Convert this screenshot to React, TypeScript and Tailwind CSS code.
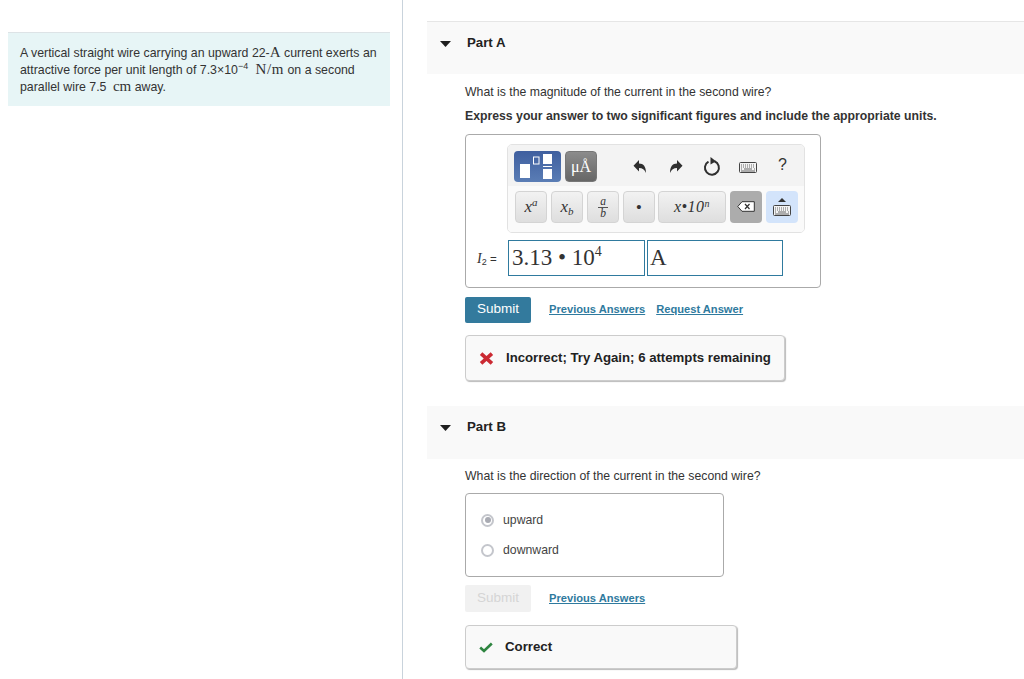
const serif = "font-['Liberation_Serif',serif]";

function Caret() {
  return <svg width="11" height="6" viewBox="0 0 11 6" className="block"><path d="M0 0H11L5.5 6Z" fill="#1f1f1f" /></svg>;
}

function PartHeader({ label, h }: { label: string; h: string }) {
  return (
    <div className={`flex items-start bg-[#f9f9f9] ${h}`}>
      <div className="ml-[13px] mt-[19px] w-[27px]"><Caret /></div>
      <div className="font-bold text-[13.25px] leading-[16px] mt-[13px] text-[#222]">{label}</div>
    </div>
  );
}

function Key({ w, children, cls = "" }: { w: string; children: React.ReactNode; cls?: string }) {
  return (
    <div className={`${w} h-[32px] rounded-[4px] border border-[#d4d4d4] bg-gradient-to-b from-[#f2f2f2] to-[#dedede] flex items-center justify-center text-[#333] ${serif} italic ${cls}`}>
      {children}
    </div>
  );
}

function KeyboardIcon({ w = 18, h = 11 }: { w?: number; h?: number }) {
  return (
    <svg width={w} height={h} viewBox="0 0 18 11" className="block">
      <rect x="0.5" y="0.5" width="17" height="10" rx="1" fill="#f4f4f4" stroke="#444" />
      <path d="M2 3H16M2 5H16" stroke="#666" strokeWidth="1" strokeDasharray="1 1" />
      <path d="M2 7H3M5 7H13M15 7H16M2 9H16" stroke="#666" strokeWidth="1" />
    </svg>
  );
}

function Toolbar() {
  return (
    <div className="ml-[41px] w-[298px] h-[89px] rounded-[5px] border border-[#e2e2e2] overflow-hidden bg-white">
      <div className="h-[41px] bg-[#f3f3f3] flex items-start pt-[6px] pl-[6px]">
        <div className="w-[47px] h-[31px] rounded-[4px] bg-gradient-to-b from-[#3f5f9f] to-[#5a7db5] flex items-center justify-center">
          <svg width="37" height="27" viewBox="0 0 37 27" className="block">
            <rect x="1" y="11" width="10" height="14" fill="#fff" />
            <rect x="14.5" y="4" width="5.5" height="7" fill="none" stroke="#fff" strokeWidth="1" />
            <rect x="24" y="1" width="9" height="10" fill="#fff" />
            <rect x="24" y="13" width="9" height="1" fill="#fff" />
            <rect x="24" y="16" width="9" height="10" fill="#fff" />
          </svg>
        </div>
        <div className={`ml-[4px] w-[32px] h-[31px] rounded-[4px] bg-gradient-to-b from-[#8c8c8c] to-[#666] border border-[#777] flex items-center justify-center text-white text-[16px] ${serif}`}>
          μÅ
        </div>
        <div className="ml-[36px] mt-[8px]">
          <svg width="14" height="15" viewBox="0 0 14 15" className="block"><path d="M6 1V4.5C10.5 4.5 13 7.5 13 14C11.5 10.5 9.5 9 6 9V12.5L0.5 6.7Z" fill="#2f2f2f" /></svg>
        </div>
        <div className="ml-[22px] mt-[8px]">
          <svg width="14" height="15" viewBox="0 0 14 15" className="block"><path d="M8 1V4.5C3.5 4.5 1 7.5 1 14C2.5 10.5 4.5 9 8 9V12.5L13.5 6.7Z" fill="#2f2f2f" /></svg>
        </div>
        <div className="ml-[20px] mt-[6px]">
          <svg width="18" height="19" viewBox="0 0 18 19" className="block"><path d="M11.5 4.2A7 7 0 1 1 5.5 4.6" fill="none" stroke="#2f2f2f" strokeWidth="2" /><path d="M7.5 0L13 4.2L7.5 7.5Z" fill="#2f2f2f" /></svg>
        </div>
        <div className="ml-[18px] mt-[11px]"><KeyboardIcon /></div>
        <div className="ml-[21px] mt-[4px] text-[16px] leading-[20px] text-[#333] font-['Liberation_Sans',sans-serif]">?</div>
      </div>
      <div className="h-[46px] bg-[#fafafa] flex items-start pt-[5px] pl-[7px] gap-[4px]">
        <Key w="w-[32px]" cls="text-[17px]"><span>x<sup className="text-[11px] -top-[6px] relative align-baseline leading-none">a</sup></span></Key>
        <Key w="w-[32px]" cls="text-[17px]"><span>x<sub className="text-[11px] top-[3px] relative align-baseline leading-none">b</sub></span></Key>
        <Key w="w-[32px]" cls="text-[11.5px] flex-col leading-[11px]">
          <span>a</span><span className="block w-[10px] h-px bg-[#555]"></span><span>b</span>
        </Key>
        <Key w="w-[32px]" cls="text-[15px] not-italic font-bold">•</Key>
        <Key w="w-[68px]" cls="text-[16px] tracking-[0.5px] -ml-[1px]"><span>x•10<sup className="text-[10px] -top-[5px] relative align-baseline leading-none">n</sup></span></Key>
        <div className="w-[32px] h-[32px] rounded-[4px] bg-[#acacac] flex items-center justify-center">
          <svg width="18" height="11" viewBox="0 0 18 11" className="block -mt-[1px]"><path d="M0.8 5.5L5 0.7H17.3V10.3H5Z" fill="#fff" stroke="#333" strokeWidth="1" /><path d="M8 3L12.5 8M12.5 3L8 8" stroke="#333" strokeWidth="1.2" /></svg>
        </div>
        <div className="w-[32px] h-[32px] rounded-[4px] bg-[#d3e4fb] flex flex-col items-center justify-center gap-[3px]">
          <svg width="8" height="4" viewBox="0 0 8 4" className="block"><path d="M0 4L4 0L8 4Z" fill="#333" /></svg>
          <KeyboardIcon />
        </div>
      </div>
    </div>
  );
}

export default function App() {
  return (
    <div className="w-[1024px] h-[679px] bg-white overflow-hidden flex font-['Liberation_Sans',sans-serif] text-[12.25px] text-[#333]">
      <div className="w-[403px] h-full border-r border-[#c9d3dc] pl-[8px] pr-[12px] pt-[32px] shrink-0">
        <div className="h-[74px] bg-[#e7f5f6] border-t border-[#dde3e6] pl-[12px] pt-[12px] text-[12.35px] text-[#333]">
          <div className="h-[17px] leading-[17px] whitespace-nowrap">A vertical straight wire carrying an upward 22-<span className={`${serif} text-[15px] leading-none`}>A</span> current exerts an</div>
          <div className="h-[17px] leading-[17px] whitespace-nowrap">attractive force per unit length of 7.3×10<sup className="text-[9px] -top-[5px] relative align-baseline leading-none">−4</sup> <span className={`${serif} text-[15px] leading-none ml-[4px] tracking-[0.6px]`}>N/m</span> on a second</div>
          <div className="h-[17px] leading-[17px] whitespace-nowrap">parallel wire 7.5 <span className={`${serif} text-[15px] leading-none ml-[3px]`}>cm</span> away.</div>
        </div>
      </div>
      <div className="flex-1 pl-[24px] pt-[21px]">
        <div className="border-t border-[#e6e6e6]">
          <PartHeader label="Part A" h="h-[52px]" />
        </div>
        <div className="pl-[38px]">
          <div className="mt-[10px] leading-[16px]">What is the magnitude of the current in the second wire?</div>
          <div className="mt-[8px] leading-[16px] font-bold text-[#333]">Express your answer to two significant figures and include the appropriate units.</div>
          <div className="mt-[10px] w-[356px] h-[154px] rounded-[4px] border border-[#aaa] pt-[9px]">
            <Toolbar />
            <div className="flex items-center mt-[7px] pl-[11px]">
              <div className="w-[31px] text-[11.5px] text-[#333] whitespace-nowrap"><span className={`${serif} italic text-[14px]`}>I</span><sub className="text-[9px] relative top-[2px] align-baseline leading-none">2</sub> =</div>
              <div className={`w-[137px] h-[36px] border border-[#2f7a9e] pl-[3px] text-[23px] leading-[34px] text-[#333] ${serif}`}>
                3.13 • 10<sup className="text-[14px] -top-[9px] relative align-baseline leading-none">4</sup>
              </div>
              <div className={`ml-[2px] w-[136px] h-[36px] border border-[#2f7a9e] pl-[2px] text-[23px] leading-[34px] text-[#333] ${serif}`}>A</div>
            </div>
          </div>
          <div className="mt-[9px] flex items-center h-[26px]">
            <div className="w-[66px] h-[26px] rounded-[2px] bg-[#337a9d] text-white text-[13.5px] pb-[2px] flex items-center justify-center">Submit</div>
            <a className="ml-[18px] font-bold text-[11.15px] pb-[2px] text-[#2f7a9e] underline">Previous Answers</a>
            <a className="ml-[11px] font-bold text-[11.15px] pb-[2px] text-[#2f7a9e] underline">Request Answer</a>
          </div>
          <div className="mt-[12px] w-[320px] h-[46px] rounded-[4px] border border-[#ccc] bg-[#f9f9f9] shadow-[1px_1px_1px_#bbb] flex items-center pl-[13px]">
            <svg width="15" height="13" viewBox="0 0 13 12" className="block"><path d="M1.5 1.5L11.5 10.5M11.5 1.5L1.5 10.5" stroke="#cb2a33" strokeWidth="3.4" /></svg>
            <span className="ml-[12px] font-bold text-[#222] text-[13.2px]">Incorrect; Try Again; 6 attempts remaining</span>
          </div>
        </div>
        <div className="mt-[25px]">
          <PartHeader label="Part B" h="h-[53px]" />
        </div>
        <div className="pl-[38px]">
          <div className="mt-[9px] leading-[16px]">What is the direction of the current in the second wire?</div>
          <div className="mt-[9px] w-[259px] h-[84px] rounded-[4px] border border-[#aaa] pl-[15px] pt-[11px]">
            <div className="flex items-center h-[30px]">
              <span className="w-[13px] h-[13px] rounded-full border-2 border-[#c4c6cc] flex items-center justify-center"><span className="w-[6px] h-[6px] rounded-full bg-[#a9abb3]"></span></span>
              <span className="ml-[9px] text-[#444]">upward</span>
            </div>
            <div className="flex items-center h-[30px]">
              <span className="w-[13px] h-[13px] rounded-full border-2 border-[#c4c6cc]"></span>
              <span className="ml-[9px] text-[#444]">downward</span>
            </div>
          </div>
          <div className="mt-[8px] flex items-center h-[27px]">
            <div className="w-[66px] h-[27px] rounded-[2px] bg-[#f1f1f1] text-[#d5d5d5] text-[13.5px] flex items-center justify-center">Submit</div>
            <a className="ml-[18px] font-bold text-[11.15px] text-[#2f7a9e] underline">Previous Answers</a>
          </div>
          <div className="mt-[13px] w-[272px] h-[44px] rounded-[4px] border border-[#ccc] bg-[#f9f9f9] shadow-[1px_1px_1px_#bbb] flex items-center pl-[13px]">
            <svg width="14" height="11" viewBox="0 0 14 11" className="block"><path d="M1.2 5.5L5 9L12.8 1.5" fill="none" stroke="#2e8540" strokeWidth="2.6" /></svg>
            <span className="ml-[12px] font-bold text-[#222] text-[13.25px]">Correct</span>
          </div>
        </div>
      </div>
    </div>
  );
}
